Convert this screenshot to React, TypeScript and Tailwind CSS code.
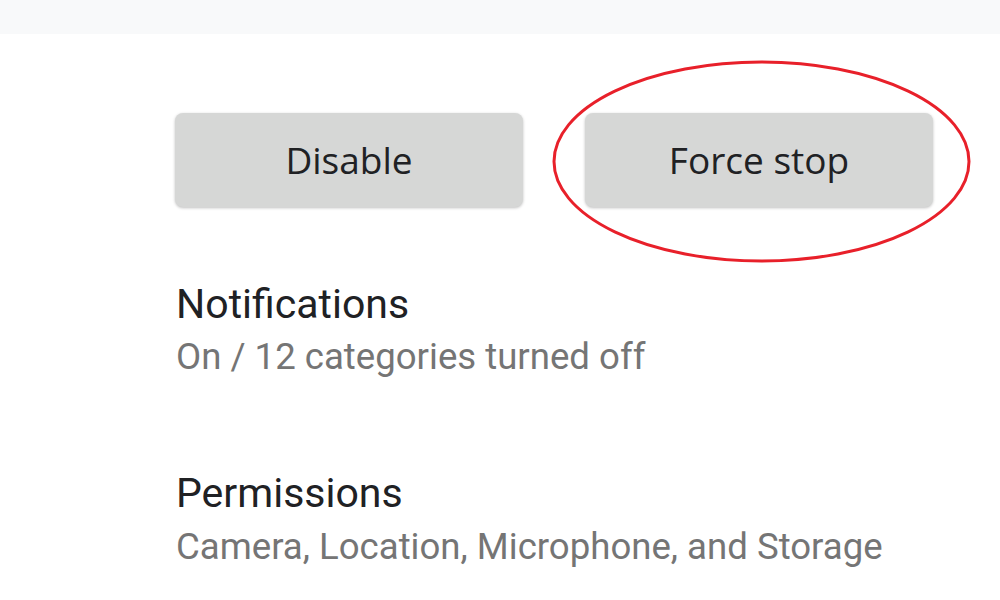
import React from 'react';

const ActionButton: React.FC<{ label: string }> = ({ label }) => (
  <button className="w-[348px] h-[94px] rounded-[8px] bg-[#d6d7d6] shadow-[0_1px_3px_rgba(0,0,0,0.25)] text-[37px] text-[#202124] font-['Open_Sans',sans-serif] font-medium">
    {label}
  </button>
);

const SettingRow: React.FC<{ title: string; summary: string; gap: string }> = ({ title, summary, gap }) => (
  <div className="flex flex-col">
    <div className="text-[41px] leading-[48px] text-[#202124]">{title}</div>
    <div className={`text-[36.6px] leading-[44px] text-[#757575] ${gap}`}>{summary}</div>
  </div>
);

export default function App() {
  return (
    <div className="w-[1000px] h-[600px] bg-white overflow-hidden font-['Roboto',sans-serif]">
      <div className="h-[34px] bg-[#f8f9fa]" />
      <div className="pl-[175px] pt-[79px] flex gap-[62px] relative">
        <ActionButton label="Disable" />
        <ActionButton label="Force stop" />
        <svg className="absolute left-[552px] top-[26px]" width="420" height="204" viewBox="0 0 420 204">
          <ellipse cx="209.5" cy="101.5" rx="207.5" ry="99.5" fill="none" stroke="#e8202a" strokeWidth="3" />
        </svg>
      </div>
      <div className="pl-[176px] pt-[73px] flex flex-col gap-[90px]">
        <SettingRow title="Notifications" summary="On / 12 categories turned off" gap="mt-[7px]" />
        <SettingRow title="Permissions" summary="Camera, Location, Microphone, and Storage" gap="mt-[8px]" />
      </div>
    </div>
  );
}
